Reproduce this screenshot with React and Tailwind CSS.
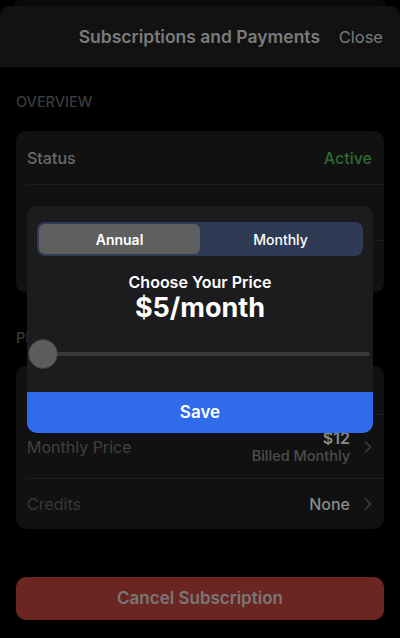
import { ChevronRight } from 'lucide-react'

function Row({ label, labelClass, right, chevron, divider, h = 'h-[54px]' }) {
  return (
    <div className={`relative flex items-center justify-between pl-[11px] ${chevron ? 'pr-[6px]' : 'pr-[12px]'} ${h}`}>
      <span className={`text-[16px] ${labelClass}`}>{label}</span>
      <div className="flex items-center gap-[8px]">
        {right}
        {chevron && <ChevronRight size={20} strokeWidth={2} className="text-[#3e3e3e]" />}
      </div>
      {divider && <div className="absolute bottom-0 left-[11px] right-0 h-px bg-[#1c1c1c]" />}
    </div>
  )
}

export default function App() {
  return (
    <div className="relative h-[638px] w-full overflow-hidden bg-black font-['Inter','Liberation_Sans',sans-serif]">
      <div className="mx-[14px] h-[6px] rounded-t-[10px] bg-[#0a0a0a]" />
      <div className="flex h-[61px] items-center rounded-t-[10px] bg-[#121212] pr-[17px]">
        <div className="flex-1 pl-[76px] pt-[2px] text-center text-[17.5px] font-semibold text-[#7b7b7b]">
          Subscriptions and Payments
        </div>
        <span className="ml-[16px] pt-[2px] text-[16.5px] text-[#7a7a7a]">Close</span>
      </div>

      <div className="px-4">
        <div className="pt-[26px] pb-[20px] text-[14.5px] font-medium leading-[18px] text-[#3b3b3b]">OVERVIEW</div>
        <div className="rounded-[10px] bg-[#111111]">
          <Row
            label="Status"
            labelClass="text-[#6a6a6a] font-medium"
            right={<span className="text-[16px] font-medium text-[#2e6a30]">Active</span>}
            divider
          />
          <Row label="" labelClass="text-[#3c3c3c]" divider h="h-[56px]" />
          <Row label="" labelClass="text-[#3c3c3c]" h="h-[52px]" />
        </div>

        <div className="pt-[36px] pb-[19px] text-[14.5px] font-medium leading-[18px] text-[#3b3b3b]">PLAN</div>
        <div className="rounded-[10px] bg-[#111111]">
          <Row label="" labelClass="text-[#3c3c3c]" divider h="h-[49px]" />
          <Row
            label="Monthly Price"
            labelClass="text-[#414141]"
            h="h-[64px]"
            chevron
            divider
            right={
              <div className="flex flex-col items-end leading-[17px]">
                <span className="text-[16px] font-semibold text-[#8a8a8a]">$12</span>
                <span className="text-[14.5px] font-medium text-[#4d4d4d]">Billed Monthly</span>
              </div>
            }
          />
          <Row
            label="Credits"
            labelClass="text-[#383838]"
            h="h-[50px]"
            chevron
            right={<span className="text-[16px] font-medium text-[#8a8a8a]">None</span>}
          />
        </div>

        <div className="mt-[48px] flex h-[43px] items-center justify-center rounded-[10px] bg-[#6b2621] text-[17px] font-semibold text-[#787878]">
          Cancel Subscription
        </div>
      </div>

      <div className="absolute left-[27px] top-[206px] w-[346px] overflow-hidden rounded-[10px] bg-[#1c1c1e]">
        <div className="mx-[10px] mt-[16px] flex h-[34px] rounded-[8px] bg-[#2f3a54] p-[2px]">
          <div className="flex flex-1 items-center justify-center rounded-[6px] bg-[#5f5f5f] text-[14px] font-semibold text-white">
            Annual
          </div>
          <div className="flex flex-1 items-center justify-center text-[14px] font-medium text-white">Monthly</div>
        </div>
        <div className="mt-[16px] text-center text-[16px] font-semibold leading-[20px] text-white">Choose Your Price</div>
        <div className="text-center text-[27px] font-bold leading-[32px] text-white">$5/month</div>
        <div className="relative mx-[1px] mt-[15px] h-[30px]">
          <div className="absolute left-[14px] right-[2px] top-[13px] h-[4px] rounded-full bg-[#38383a]" />
          <div className="absolute left-0 top-0 h-[30px] w-[30px] rounded-full border border-[#3a3a3a] bg-[#5d5d5d]" />
        </div>
        <div className="mt-[23px] flex h-[41px] items-center justify-center bg-[#2f6bea] text-[17px] font-semibold text-white">
          Save
        </div>
      </div>
    </div>
  )
}
